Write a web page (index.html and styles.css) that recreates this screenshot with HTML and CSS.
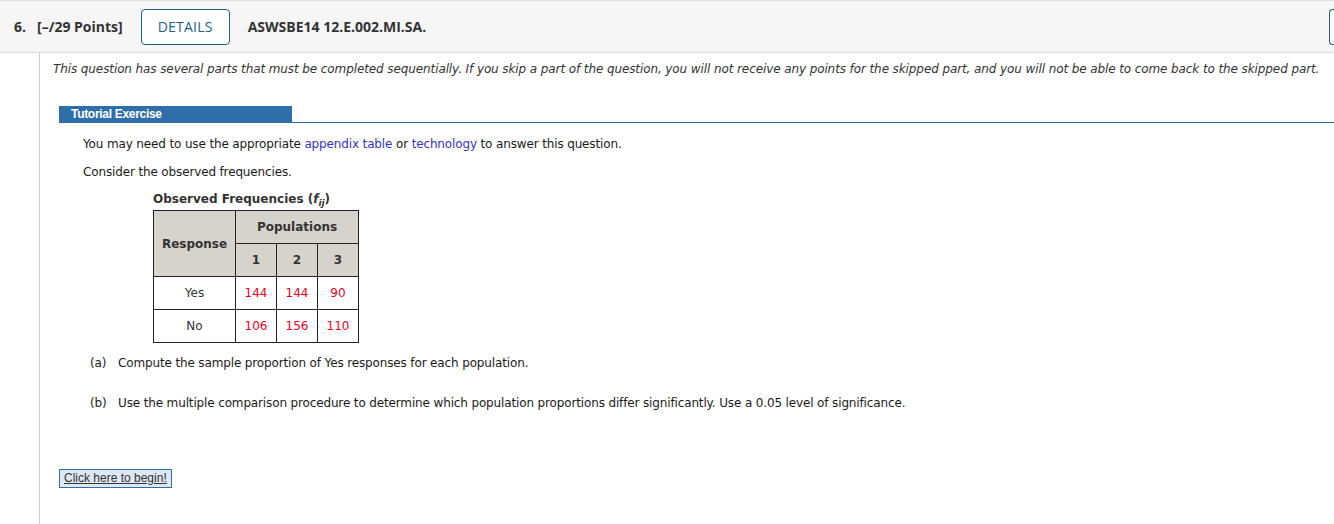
FILE: index.html
```html
<!DOCTYPE html>
<html>
<head>
<meta charset="utf-8">
<link rel="stylesheet" href="styles.css">
</head>
<body>
<div class="header">
  <span class="qnum">6.</span>
  <span class="points">[–/29 Points]</span>
  <span class="details">DETAILS</span>
  <span class="code">ASWSBE14 12.E.002.MI.SA.</span>
  <span class="spacer"></span>
  <span class="rightbtn"></span>
</div>
<div class="main">
  <div class="content">
    <p class="notice">This question has several parts that must be completed sequentially. If you skip a part of the question, you will not receive any points for the skipped part, and you will not be able to come back to the skipped part.</p>
    <div class="tut-head"><span class="tut-label">Tutorial Exercise</span><span class="tut-line"></span></div>
    <div class="tut-body">
      <p class="line1">You may need to use the appropriate <span class="link">appendix table</span> or <span class="link">technology</span> to answer this question.</p>
      <p class="line2">Consider the observed frequencies.</p>
      <div class="tblwrap">
        <div class="caption">Observed Frequencies (<i>f</i><sub><i>ij</i></sub>)</div>
        <table class="freq">
          <tr><th rowspan="2" class="resp">Response</th><th colspan="3">Populations</th></tr>
          <tr><th class="num">1</th><th class="num">2</th><th class="num">3</th></tr>
          <tr><td>Yes</td><td class="red">144</td><td class="red">144</td><td class="red">90</td></tr>
          <tr><td>No</td><td class="red">106</td><td class="red">156</td><td class="red">110</td></tr>
        </table>
      </div>
      <div class="part pa"><span class="plabel">(a)</span><span>Compute the sample proportion of Yes responses for each population.</span></div>
      <div class="part pb"><span class="plabel">(b)</span><span>Use the multiple comparison procedure to determine which population proportions differ significantly. Use a 0.05 level of significance.</span></div>
    </div>
    <div class="begin"><span class="beginbtn">Click here to begin!</span></div>
  </div>
</div>
</body>
</html>
```
FILE: styles.css
```css
html, body { margin: 0; padding: 0; background: #fff; }
body { width: 1334px; height: 524px; overflow: hidden; }
.header {
  display: flex; align-items: center;
  height: 53px; box-sizing: border-box;
  border-top: 1px solid #e2e2e2; border-bottom: 1px solid #dcdcdc;
  background: #f6f6f6;
  font-family: "Open Sans", "Noto Sans", sans-serif; font-size: 14px; font-weight: 700; color: #333;
  padding-left: 14px;
}
.qnum { margin-right: 11px; }
.points { margin-right: 18px; }
.details {
  box-sizing: border-box; width: 89px; height: 36px;
  display: flex; align-items: center; justify-content: center;
  border: 1px solid #1f5f8f; border-radius: 4px; background: #fff;
  color: #1f5f8f; font-weight: 400; margin-right: 18px; letter-spacing: 0.2px;
}
.spacer { flex: 1; }
.rightbtn {
  width: 5px; height: 36px; box-sizing: border-box;
  border: 1px solid #1f5f8f; border-right: none; border-radius: 4px 0 0 4px;
  background: #fff;
}
.main { display: flex; height: 471px; }
.main::before { content: ""; width: 39px; border-right: 1px solid #cfcfcf; flex: none; }
.content { flex: 1; font-family: "DejaVu Sans", Verdana, sans-serif; font-size: 12px; color: #1a1a1a; }
.notice { margin: 9px 0 0 13px; font-style: italic; color: #333; white-space: nowrap; letter-spacing: -0.1px; }
.tut-head { display: flex; align-items: flex-end; margin: 30px 0 0 19px; }
.tut-label {
  width: 233px; height: 17px; box-sizing: border-box; padding-left: 12px;
  background: #2f6ea8; color: #fff;
  font-family: "Liberation Sans", Arial, sans-serif; font-weight: 700; font-size: 12px; line-height: 17px;
  letter-spacing: -0.3px;
}
.tut-line { flex: 1; border-bottom: 1px solid #2f6ea8; }
.tut-body { padding-left: 43px; letter-spacing: -0.14px; }
.tut-body p { margin: 0; }
.line1 { margin-top: 14px !important; }
.line2 { margin-top: 14px !important; }
.link { color: #3333cc; }
.tblwrap { margin: 13px 0 0 70px; }
.caption { font-weight: 700; color: #333; font-size: 12px; height: 16px; letter-spacing: 0; }
.caption sub { font-size: 9px; }
.freq { border-collapse: collapse; margin-top: 2px; letter-spacing: 0; }
.freq th, .freq td { border: 1px solid #222; height: 32px; padding: 0; text-align: center; font-size: 12px; }
.freq th { background: #d6d3cc; color: #333; }
.freq th.resp { width: 81px; }
.freq th.num { width: 40px; }
.freq td { color: #333; }
.freq td.red { color: #ee0022; }
.part { display: flex; }
.plabel { width: 28px; padding-left: 7px; flex: none; }
.pa { margin-top: 13px; }
.pb { margin-top: 26px; }
.begin { margin: 59px 0 0 19px; }
.beginbtn {
  display: inline-block; box-sizing: border-box; height: 19px; padding: 0 4px;
  background: #dde8f3; border: 1px solid #2f6ea8;
  font-family: "Liberation Sans", Arial, sans-serif; font-size: 12px; line-height: 17px;
  color: #333; text-decoration: underline;
}
```
